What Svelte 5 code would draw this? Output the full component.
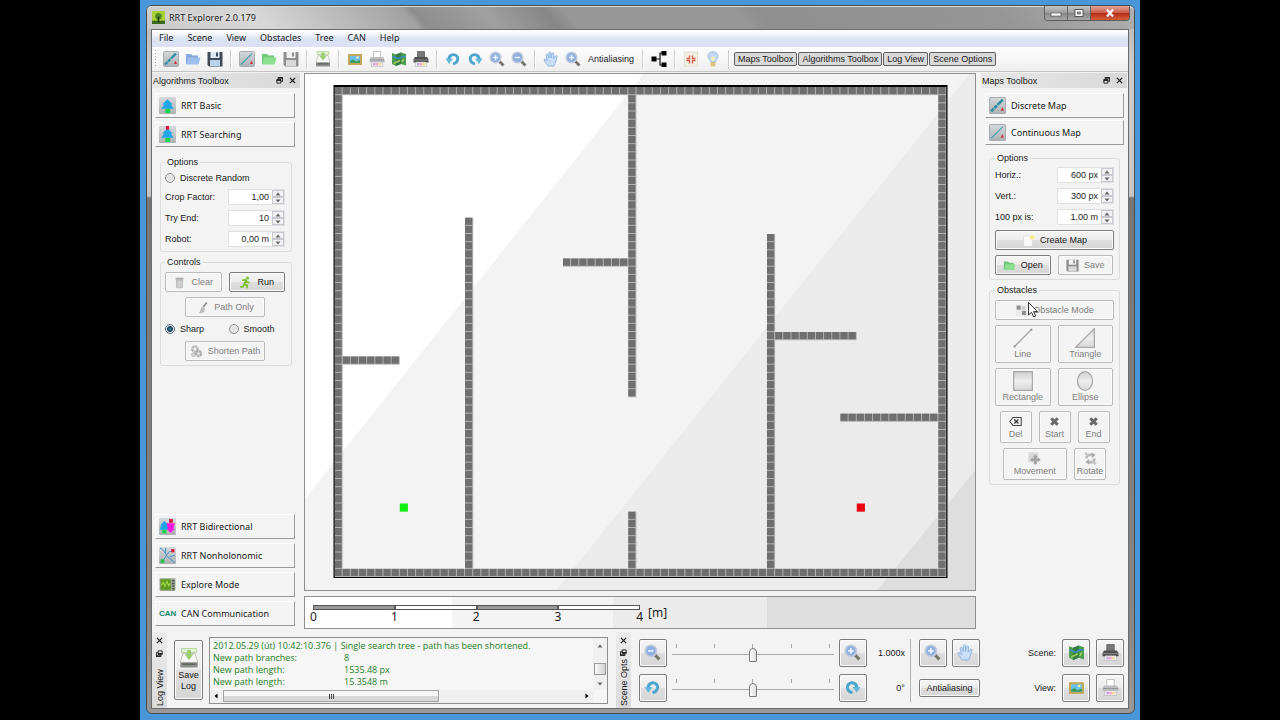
<script lang="ts">
	type Wall = { x: number; y: number; w: number; h: number };

	const COLS = 75;
	const ROWS = 60;

	const walls: Wall[] = [
		{ x: 0, y: 0, w: COLS, h: 1 },
		{ x: 0, y: ROWS - 1, w: COLS, h: 1 },
		{ x: 0, y: 1, w: 1, h: ROWS - 2 },
		{ x: COLS - 1, y: 1, w: 1, h: ROWS - 2 },
		{ x: 16, y: 16, w: 1, h: 43 },
		{ x: 36, y: 1, w: 1, h: 37 },
		{ x: 36, y: 52, w: 1, h: 7 },
		{ x: 53, y: 18, w: 1, h: 41 },
		{ x: 28, y: 21, w: 8, h: 1 },
		{ x: 1, y: 33, w: 7, h: 1 },
		{ x: 54, y: 30, w: 10, h: 1 },
		{ x: 62, y: 40, w: 12, h: 1 }
	];

	const cells = walls.flatMap((wall) =>
		Array.from({ length: wall.w * wall.h }, (_, i) => ({
			x: wall.x + (i % wall.w),
			y: wall.y + Math.floor(i / wall.w)
		}))
	);

	const menus = ['File', 'Scene', 'View', 'Obstacles', 'Tree', 'CAN', 'Help'];

	const tools = [
		[['map', 'Discrete map'], ['folder-blue', 'Open map'], ['floppy', 'Save map']],
		[['map-thin', 'Continuous map'], ['folder', 'Open tree'], ['floppy-gray', 'Save tree']],
		[['drive', 'Save log']],
		[['picture', 'Save view'], ['printer', 'Print view'], ['mapgreen', 'Save scene'], ['printer-dark', 'Print scene']],
		[['undo', 'Rotate left'], ['redo', 'Rotate right'], ['zoom-in', 'Zoom in'], ['zoom-out', 'Zoom out']]
	];

	const toggles = ['Maps Toolbox', 'Algorithms Toolbox', 'Log View', 'Scene Options'];

	const bottomPages = [
		['bidi', 'RRT Bidirectional'],
		['nonholo', 'RRT Nonholonomic'],
		['explore', 'Explore Mode'],
		['can', 'CAN Communication']
	];

	const log = [
		['New path branches:', '8'],
		['New path length:', '1535.48 px'],
		['New path length:', '15.3548 m']
	];

	let path = $state('sharp');
	let zoom = $state(50);
	let rotation = $state(50);
	let crop = $state('1,00');
	let tryEnd = $state('10');
	let robot = $state('0,00 m');
	let horiz = $state('600 px');
	let vert = $state('300 px');
	let unit = $state('1,00 m');
</script>

{#snippet icon(name: string)}
	<svg class="icon" viewBox="0 0 16 16" aria-hidden="true">
		{#if name === 'map' || name === 'map-thin'}
			<rect x="0.5" y="0.5" width="15" height="15" rx="1" fill="url(#tile)" stroke="#a9adb0" />
			{#if name === 'map'}
				<path d="M2 13.500L4.500 11M5 10.500L7.500 8M8 7.500L13 2.500" stroke="#2b8fa3" stroke-width="2.400" />
			{:else}
				<path d="M2 13.500L13 2.500" stroke="#46a3a8" stroke-width="1.200" />
			{/if}
			<path d="M11 13L12.500 9.500L14 13Z" fill="#d2303c" />
		{:else if name === 'folder' || name === 'folder-blue'}
			{@const blue = name === 'folder-blue'}
			<path d="M1 3H6L7.500 4.500H13V13H1Z" fill={blue ? '#86a9dd' : '#70c878'} />
			<path d="M3 6.500H15.500L13.500 13.500H1.500Z" fill={blue ? '#9fc0ee' : '#8be08f'} />
		{:else if name === 'floppy' || name === 'floppy-gray'}
			{@const dark = name === 'floppy'}
			<path d="M0.500 1H15.500V15.500H2L0.500 14Z" fill={dark ? '#3f4b58' : '#8f8f8f'} />
			<rect x="3.500" y="1" width="9" height="6" fill={dark ? '#dfe9f5' : '#f1f1f1'} />
			<rect x="9" y="1.500" width="2" height="4" fill={dark ? '#3f4b58' : '#8f8f8f'} />
			<rect x="3" y="9" width="10" height="6" fill={dark ? '#b9d2ea' : '#d9d9d9'} />
		{:else if name === 'drive'}
			<path d="M3 4.500H13L15 11.500H1Z" fill="#f6f6f4" stroke="#b8b8b4" stroke-width="0.700" />
			<path d="M1 11.500H15V14.500C15 15 14.500 15.500 14 15.500H2C1.500 15.500 1 15 1 14.500Z" fill="#8d908d" />
			<rect x="2.500" y="12.300" width="11" height="1.200" fill="#5c605c" />
			<rect x="2" y="0.500" width="12" height="3" fill="#e2f0d6" stroke="#a8cf88" stroke-width="0.600" />
			<path d="M6.500 1.500H9.500V5H11.500L8 9.500L4.500 5H6.500Z" fill="#9acc70" />
		{:else if name === 'picture'}
			<rect x="1" y="3" width="14" height="11" fill="#bfa75c" />
			<rect x="3" y="5" width="10" height="7" fill="#6cc0ee" />
			<path d="M3 12V10L6 8.500L9 10.500L13 9V12Z" fill="#3f9a5c" />
			<circle cx="10.500" cy="6.500" r="1.200" fill="#f5f3b4" />
		{:else if name === 'printer' || name === 'printer-dark'}
			{@const dark = name === 'printer-dark'}
			<path d="M4.500 0.500H11.500V7H4.500Z" fill={dark ? '#777' : '#fff'} stroke={dark ? '#555' : '#aaa'} stroke-width="0.700" />
			<path d="M2 6H14L15.500 8.500V11.500H0.500V8.500Z" fill={dark ? '#4e4e4e' : '#bcbec2'} />
			<rect x="1" y="8.500" width="14" height="1" fill={dark ? '#888' : '#94969a'} />
			<path d="M3 11H13L14 15.500H2Z" fill="#f3f3f6" stroke="#aaa" stroke-width="0.500" />
			<rect x="4" y="12" width="2.500" height="2.500" fill="#c8a8e0" />
			<rect x="6.500" y="12" width="3" height="2.500" fill="#f0b0c8" />
			<rect x="9.500" y="12" width="2.500" height="2.500" fill="#f0dc94" />
		{:else if name === 'mapgreen'}
			<path d="M1 2L5 3.500L10 1.500L15 3V14.500L10 13L5 15L1 13Z" fill="#4a9c4e" />
			<path d="M5 3.500L10 1.500V13L5 15Z" fill="#347c42" />
			<path d="M1.500 6C4 5 5 8 7.500 7.500S10 4 14.500 6" fill="none" stroke="#3c8cc8" stroke-width="1.500" />
			<path d="M3 13C4 10 7 12 9 9M11 11L13 8" fill="none" stroke="#a2ce5c" stroke-width="1.500" />
		{:else if name === 'undo'}
			<path d="M4 8.500C3.500 4.500 8.500 2 11.700 5C14.200 8 12 12.500 8 12.800" fill="none" stroke="#4aa6cc" stroke-width="2.800" />
			<path d="M0.500 7.500H8L4 13Z" fill="#62b8da" />
		{:else if name === 'redo'}
			<path d="M12 8.500C12.500 4.500 7.500 2 4.300 5C1.800 8 4 12.500 8 12.800" fill="none" stroke="#4aa6cc" stroke-width="2.800" />
			<path d="M15.500 7.500H8L12 13Z" fill="#62b8da" />
		{:else if name === 'zoom-in' || name === 'zoom-out' || name === 'zoom-fit'}
			<path d="M10 10L14.500 14.500" stroke="#77736d" stroke-width="2.800" />
			<circle cx="6.500" cy="6.500" r="5.300" fill="#8eb0e0" stroke="#c2cad8" stroke-width="1.500" />
			<path d="M3.800 6.500H9.200" stroke="#eef4ff" stroke-width="1.500" />
			{#if name !== 'zoom-out'}
				<path d="M6.500 3.800V9.200" stroke="#eef4ff" stroke-width="1.500" />
			{/if}
		{:else if name === 'hand'}
			<path
				d="M5 15C3.500 13 1.500 10.500 1 8.500C2 7.500 3 8.500 4.200 10L3 4C3.500 2.500 4.800 3 5 4L6 7L5.800 2C6.300 0.500 7.800 0.700 8 2V7L9 2.500C9.700 1.200 11 1.700 10.800 3L10.500 7.500L12.500 5C13.300 4.200 14.500 4.800 14 6L12.500 11C12 13 11.500 14 11 15Z"
				fill="#c9dff8"
				stroke="#8bb0e0"
				stroke-width="0.900"
			/>
		{:else if name === 'nodes'}
			<path d="M4 8H9M13 2H9V14H13" fill="none" stroke="#111" stroke-width="1.200" />
			<rect x="0.500" y="5.500" width="5" height="5" fill="#000" />
			<rect x="10.500" y="0" width="5" height="4.500" fill="#000" />
			<rect x="10.500" y="11.500" width="5" height="4.500" fill="#000" />
		{:else if name === 'fit'}
			<rect x="1.500" y="1" width="13" height="14" fill="#f2efe4" stroke="#dcd8cb" stroke-width="0.700" />
			<path d="M6.500 4.500V7.500H3.500M9.500 4.500V7.500H12.500M6.500 12.500V9.500H3.500M9.500 12.500V9.500H12.500" fill="none" stroke="#d6604e" stroke-width="1.400" />
		{:else if name === 'bulb'}
			<path d="M5.500 11C5.500 9 3 8 3 5C3 2.300 5.200 0.700 8 0.700S13 2.300 13 5C13 8 10.500 9 10.500 11Z" fill="#c4d8f2" stroke="#9ab6dc" stroke-width="0.800" />
			<path d="M6.500 5.500H9.500V10H6.500Z" fill="#f5f0b0" />
			<rect x="5.500" y="11" width="5" height="4.500" rx="1" fill="#d8c478" />
		{:else if name === 'basic' || name === 'searching'}
			<rect width="16" height="16" rx="1" fill="url(#tile)" />
			<rect x="6" y="11" width="4.500" height="4" fill="#18d848" />
			<path d="M8 2L13 7H11L14 11H2L5 7H3Z" fill="#22a6ea" />
			{#if name === 'searching'}
				<rect x="6.500" y="0" width="3" height="3.500" fill="#d8183c" />
			{/if}
		{:else if name === 'bidi'}
			<rect width="16" height="16" rx="1" fill="url(#tile)" />
			<rect x="3" y="11" width="4" height="3.500" fill="#18d848" />
			<rect x="9.500" y="1" width="3.500" height="3.500" fill="#d8183c" />
			<path d="M5 2.500L9 7H8L9.500 11H0.500L2 7H1Z" fill="#22a6ea" />
			<path d="M11 14L7 10H8.500L7 5H15L13.500 10H15Z" fill="#f418e4" />
		{:else if name === 'nonholo'}
			<rect width="16" height="16" rx="1" fill="url(#tile)" />
			<path d="M1 1C5 3 6 6 7 8S11 11 15 15M3 13C5 12 6 9 7 8S9 4 12 4M6 1L6.500 6M10 9L15 8" fill="none" stroke="#3a8fc8" stroke-width="0.900" />
			<rect x="1.500" y="11.500" width="3.500" height="3.500" fill="#2cc050" />
			<rect x="11.500" y="2" width="3" height="3" fill="#d8183c" />
		{:else if name === 'explore'}
			<rect x="0.500" y="2" width="15" height="12" rx="1" fill="#9ea69c" />
			<rect x="1.500" y="3" width="9.500" height="10" fill="#5f9c1e" />
			<path d="M2 9L4 6L5.500 9.500L7.500 5L9 9L10.500 7" fill="none" stroke="#a6d84c" />
			<path d="M12.500 4.500H14.500M12.500 7H14.500M12.500 9.500H14.500M12.500 12H14.500" stroke="#3c4a3c" stroke-width="1.300" />
		{:else if name === 'trash'}
			<path d="M3.500 5H12.500L12 15H4Z" fill="#bdbdbd" />
			<rect x="3" y="2" width="10" height="2.500" rx="1" fill="#a8a8a8" />
			<path d="M6 6V14M8 6V14M10 6V14" stroke="#dedede" />
		{:else if name === 'runner'}
			<circle cx="10.500" cy="2.500" r="2" fill="#8bc63a" />
			<path d="M4 5.500L8 4.500L10 7.500L13 8M8.500 5.500L6.500 10L10 11.500V15M6.500 10L5 13L1.500 13.500" fill="none" stroke="#7cc12c" stroke-width="2.200" />
		{:else if name === 'brush'}
			<path d="M12.500 1L14 2.500L10 8L8 7Z" fill="#8e8e8e" />
			<path d="M7 7L11 9L10 14L3 15C5.500 13 5.500 10 7 7Z" fill="#bdbdbd" />
		{:else if name === 'gears'}
			<circle cx="6" cy="5" r="3.300" fill="none" stroke="#b8b8b8" stroke-width="3" stroke-dasharray="3 0.600" />
			<circle cx="10.500" cy="10.500" r="3" fill="none" stroke="#aaa" stroke-width="3" stroke-dasharray="3 0.600" />
			<circle cx="4" cy="12" r="1.800" fill="none" stroke="#c4c4c4" stroke-width="2" />
		{:else if name === 'new'}
			<path d="M2 2.500H13V15H2Z" fill="#fafafa" stroke="#d4d4d4" stroke-width="0.700" />
			<circle cx="12.500" cy="4" r="3.300" fill="#f5f3b4" />
			<circle cx="12.500" cy="4" r="1.500" fill="#efe68a" />
		{:else if name === 'mode'}
			<rect x="1.500" y="1" width="13" height="14" fill="#ebebeb" />
			<rect x="2" y="2" width="5" height="5" fill="#8e8e8e" />
			<rect x="8.500" y="8.500" width="5" height="5" fill="#8e8e8e" />
			<rect x="8.500" y="3" width="4" height="4" fill="#c8c8c8" />
		{:else if name === 'line'}
			<path d="M1 15L15 1" stroke="#a4a4a4" />
			<path d="M0.500 14H2V15.500H0.500ZM14 0.500H15.500V2H14Z" fill="#909090" />
		{:else if name === 'triangle'}
			<path d="M15.500 0.500V15.500H0.500Z" fill="url(#shape)" stroke="#a8a8a8" />
		{:else if name === 'rectangle'}
			<rect x="0.500" y="0.500" width="15" height="15" fill="url(#shape)" stroke="#a8a8a8" />
		{:else if name === 'ellipse'}
			<ellipse cx="8" cy="8" rx="6" ry="7.500" fill="url(#shape)" stroke="#a8a8a8" />
		{:else if name === 'del'}
			<path d="M1 8L5 3H15V13H5Z" fill="none" stroke="#444" stroke-width="1.300" />
			<path d="M6.500 5.500L11.500 10.500M11.500 5.500L6.500 10.500" stroke="#333" stroke-width="1.600" />
		{:else if name === 'cross'}
			<path d="M4 4L12 12M12 4L4 12" stroke="#696969" stroke-width="3.800" />
		{:else if name === 'move'}
			<rect x="0.500" y="0.500" width="12" height="12" fill="#d8d8d8" />
			<path d="M9 3L12 6H10.500V8H12.500V6.500L15.500 9.500L12.500 12.500V11H10.500V13H12L9 16L6 13H7.500V11H5.500V12.500L2.500 9.500L5.500 6.500V8H7.500V6H6Z" fill="#a2a2a2" />
		{:else if name === 'rotate'}
			<path d="M3 8C3 4 7 2.500 10 4M13 8C13 12 9 13.500 6 12" fill="none" stroke="#b8b8b8" stroke-width="3.200" />
			<path d="M9 0.500L14.500 3.500L10 7.500ZM7 15.500L1.500 12.500L6 8.500Z" fill="#aaa" />
			<path d="M1.500 1L5 4.500M11 11.500L14.500 15" stroke="#c4c4c4" stroke-width="3" />
		{/if}
	</svg>
{/snippet}

{#snippet dockButtons()}
	<button class="dock-btn" aria-label="Float">
		<svg viewBox="0 0 8 8"><path d="M2.500 2V1H7.500V5H6M1 3.500H5.500V7H1Z" fill="none" stroke="#111" /><path d="M2 1H8M0.500 3.500H6" stroke="#111" stroke-width="1.600" /></svg>
	</button>
	<button class="dock-btn" aria-label="Close">
		<svg viewBox="0 0 8 8"><path d="M1 1L7 7M7 1L1 7" stroke="#111" stroke-width="1.400" /></svg>
	</button>
{/snippet}

{#snippet arrows(label: string)}
	<span class="arrows">
		<button aria-label="Increase {label}"><svg viewBox="0 0 6 4"><path d="M3 0.500L5.500 3.500H0.500Z" /></svg></button>
		<button aria-label="Decrease {label}"><svg viewBox="0 0 6 4"><path d="M3 3.500L5.500 0.500H0.500Z" /></svg></button>
	</span>
{/snippet}

<svg class="defs" aria-hidden="true">
	<defs>
		<linearGradient id="tile" x1="0" y1="0" x2="0" y2="1">
			<stop offset="0" stop-color="#d6d9db" />
			<stop offset="1" stop-color="#adb1b3" />
		</linearGradient>
		<linearGradient id="shape" x1="0" y1="0" x2="0" y2="1">
			<stop offset="0" stop-color="#cecece" />
			<stop offset="0.5" stop-color="#ededed" />
			<stop offset="1" stop-color="#d8d8d8" />
		</linearGradient>
	</defs>
</svg>

<div class="screen">
	<div class="desktop">
		<div class="window">
			<header class="titlebar">
				<svg class="app-icon" viewBox="0 0 16 16" aria-hidden="true">
					<rect width="16" height="16" fill="#a6d236" />
					<rect y="12" width="16" height="4" fill="#3d6a1c" />
					<circle cx="8" cy="6.500" r="4" fill="#4f8a22" />
					<rect x="7" y="7" width="2" height="7" fill="#22380f" />
				</svg>
				<h1>RRT Explorer 2.0.179</h1>
				<div class="caption">
					<button aria-label="Minimize"><svg viewBox="0 0 12 10"><rect x="1" y="5" width="10" height="3" fill="#fff" stroke="#555" stroke-width="0.700" /></svg></button>
					<button aria-label="Maximize"><svg viewBox="0 0 12 10"><rect x="2" y="1.500" width="8" height="7" fill="#fff" stroke="#555" /><rect x="4.500" y="4" width="3" height="2" fill="#999" stroke="#555" stroke-width="0.700" /></svg></button>
					<button class="close" aria-label="Close window"><svg viewBox="0 0 12 10"><path d="M3 1.500L9 8.500M9 1.500L3 8.500" stroke="#fff" stroke-width="2.200" /></svg></button>
				</div>
			</header>

			<div class="client">
				<nav class="menubar">
					{#each menus as menu}
						<button>{menu}</button>
					{/each}
				</nav>

				<div class="toolbar">
					<span class="grip"></span>
					{#each tools as group}
						{#each group as [name, label]}
							<button class="tool" aria-label={label}>{@render icon(name)}</button>
						{/each}
						<span class="sep"></span>
					{/each}
					<button class="tool" aria-label="Pan">{@render icon('hand')}</button>
					<button class="tool" aria-label="Reset zoom">{@render icon('zoom-fit')}</button>
					<button class="tool-text">Antialiasing</button>
					<span class="sep"></span>
					<button class="tool" aria-label="Show tree">{@render icon('nodes')}</button>
					<span class="sep"></span>
					<button class="tool" aria-label="Fit window">{@render icon('fit')}</button>
					<button class="tool" aria-label="Hints">{@render icon('bulb')}</button>
					<span class="sep"></span>
					{#each toggles as toggle}
						<button class="toggle" aria-pressed="true">{toggle}</button>
					{/each}
				</div>

				<div class="middle">
					<aside class="dock left">
						<div class="dock-title"><h2>Algorithms Toolbox</h2>{@render dockButtons()}</div>
						<div class="pages">
							<button class="page">{@render icon('basic')}RRT Basic</button>
							<button class="page">{@render icon('searching')}RRT Searching</button>
							<div class="page-body">
								<fieldset class="options">
									<legend>Options</legend>
									<label class="choice"><input type="radio" name="random" />Discrete Random</label>
									<div class="field">
										<label for="crop">Crop Factor:</label>
										<div class="spin"><input id="crop" bind:value={crop} />{@render arrows('crop factor')}</div>
									</div>
									<div class="field">
										<label for="try-end">Try End:</label>
										<div class="spin"><input id="try-end" bind:value={tryEnd} />{@render arrows('try end')}</div>
									</div>
									<div class="field">
										<label for="robot">Robot:</label>
										<div class="spin"><input id="robot" bind:value={robot} />{@render arrows('robot')}</div>
									</div>
								</fieldset>
								<fieldset class="controls">
									<legend>Controls</legend>
									<div class="pair">
										<button class="btn" disabled>{@render icon('trash')}Clear</button>
										<button class="btn">{@render icon('runner')}Run</button>
									</div>
									<button class="btn mid" disabled>{@render icon('brush')}Path Only</button>
									<div class="pair">
										<label class="choice"><input type="radio" name="path" value="sharp" bind:group={path} />Sharp</label>
										<label class="choice"><input type="radio" name="path" value="smooth" bind:group={path} />Smooth</label>
									</div>
									<button class="btn mid" disabled>{@render icon('gears')}Shorten Path</button>
								</fieldset>
							</div>
							{#each bottomPages as [name, label]}
								<button class="page">
									{#if name === 'can'}
										<span class="can">CAN</span>
									{:else}
										{@render icon(name)}
									{/if}
									{label}
								</button>
							{/each}
						</div>
					</aside>

					<main class="center">
						<svg class="scene" viewBox="0 0 669 516" preserveAspectRatio="xMidYMid meet">
							<path d="M-600 -200H1300V900H-600Z" fill="#fff" />
							<path d="M338 0H1300V900H-384L0 424Z" fill="#f3f3f3" />
							<path d="M664 0H1300V900H-60L251 516Z" fill="#ebebeb" />
							<path d="M669 397L1300 -380V900H270L572 516Z" fill="#dedede" />
							<rect x="29" y="12" width="612" height="491" fill="none" stroke="#000" stroke-width="2" />
							<svg x="29" y="13" width="612" height="490" viewBox="0 0 {COLS} {ROWS}" preserveAspectRatio="none">
								{#each walls as wall}
									<rect x={wall.x} y={wall.y} width={wall.w} height={wall.h} fill="#b4b4b4" />
								{/each}
								{#each cells as cell}
									<rect x={cell.x} y={cell.y} width="0.88" height="0.88" fill="#6f6f6f" />
								{/each}
								<rect x="8" y="51" width="1" height="1" fill="#12ee12" />
								<rect x="64" y="51" width="1" height="1" fill="#ea0010" />
							</svg>
						</svg>

						<div class="scale">
							<div class="ruler">
								{#each [1, 2, 3, 4] as n}
									<span class="segment" class:filled={n % 2 === 1}><span class="mark">{n}</span></span>
								{/each}
								<span class="mark zero">0</span>
							</div>
							<span class="unit">[m]</span>
						</div>
					</main>

					<aside class="dock right">
						<div class="dock-title"><h2>Maps Toolbox</h2>{@render dockButtons()}</div>
						<div class="pages">
							<button class="page">{@render icon('map')}Discrete Map</button>
							<button class="page">{@render icon('map-thin')}Continuous Map</button>
							<div class="page-body">
								<fieldset class="options">
									<legend>Options</legend>
									<div class="field">
										<label for="horiz">Horiz.:</label>
										<div class="spin"><input id="horiz" bind:value={horiz} />{@render arrows('width')}</div>
									</div>
									<div class="field">
										<label for="vert">Vert.:</label>
										<div class="spin"><input id="vert" bind:value={vert} />{@render arrows('height')}</div>
									</div>
									<div class="field">
										<label for="unit">100 px is:</label>
										<div class="spin"><input id="unit" bind:value={unit} />{@render arrows('scale')}</div>
									</div>
									<button class="btn wide">{@render icon('new')}Create Map</button>
									<div class="pair">
										<button class="btn">{@render icon('folder')}Open</button>
										<button class="btn" disabled>{@render icon('floppy-gray')}Save</button>
									</div>
								</fieldset>
								<fieldset class="obstacles">
									<legend>Obstacles</legend>
									<div class="mode">
										<button class="btn wide" disabled>{@render icon('mode')}Obstacle Mode</button>
										<svg class="cursor" viewBox="0 0 10 16" aria-hidden="true">
											<path d="M0.500 0.500V13L3.500 10.300L5.700 15L7.700 14L5.600 9.600H9.500Z" fill="#fff" stroke="#333" />
										</svg>
									</div>
									<div class="pair">
										<button class="btn stack" disabled>{@render icon('line')}Line</button>
										<button class="btn stack" disabled>{@render icon('triangle')}Triangle</button>
									</div>
									<div class="pair">
										<button class="btn stack" disabled>{@render icon('rectangle')}Rectangle</button>
										<button class="btn stack" disabled>{@render icon('ellipse')}Ellipse</button>
									</div>
									<div class="row">
										<button class="btn small" disabled>{@render icon('del')}Del</button>
										<button class="btn small" disabled>{@render icon('cross')}Start</button>
										<button class="btn small" disabled>{@render icon('cross')}End</button>
									</div>
									<div class="row">
										<button class="btn small movement" disabled>{@render icon('move')}Movement</button>
										<button class="btn small" disabled>{@render icon('rotate')}Rotate</button>
									</div>
								</fieldset>
							</div>
						</div>
					</aside>
				</div>

				<div class="bottom">
					<section class="log-dock">
						<div class="side-title"><h2>Log View</h2>{@render dockButtons()}</div>
						<button class="btn save-log">{@render icon('drive')}Save<br />Log</button>
						<div class="log">
							<div class="log-text">
								<p>2012.05.29 (út) 10:42:10.376 | Single search tree - path has been shortened.</p>
								{#each log as [label, value]}
									<p class="entry"><span>{label}</span><span>{value}</span></p>
								{/each}
							</div>
							<div class="vbar"><svg viewBox="0 0 6 4"><path d="M3 0.500L5.500 3.500H0.500Z" /></svg><span></span><svg viewBox="0 0 6 4"><path d="M3 3.500L5.500 0.500H0.500Z" /></svg></div>
							<div class="hbar"><svg viewBox="0 0 4 6"><path d="M0.500 3L3.500 0.500V5.500Z" /></svg><span><i></i></span><svg viewBox="0 0 4 6"><path d="M3.500 3L0.500 0.500V5.500Z" /></svg></div>
						</div>
					</section>

					<section class="scene-dock">
						<div class="side-title"><h2>Scene Opts</h2>{@render dockButtons()}</div>
						<div class="sliders">
							<button class="btn square" aria-label="Zoom out">{@render icon('zoom-out')}</button>
							<div class="slider">
								<div class="ticks"><i></i><i></i><i></i><i></i><i></i></div>
								<input type="range" aria-label="Zoom" bind:value={zoom} />
							</div>
							<button class="btn square" aria-label="Zoom in">{@render icon('zoom-in')}</button>
							<output>1.000x</output>
							<button class="btn square" aria-label="Rotate left">{@render icon('undo')}</button>
							<div class="slider">
								<div class="ticks"><i></i><i></i><i></i><i></i><i></i></div>
								<input type="range" aria-label="Rotation" bind:value={rotation} />
							</div>
							<button class="btn square" aria-label="Rotate right">{@render icon('redo')}</button>
							<output>0°</output>
						</div>
						<div class="view-tools">
							<div class="pair">
								<button class="btn square" aria-label="Reset zoom">{@render icon('zoom-fit')}</button>
								<button class="btn square" aria-label="Pan">{@render icon('hand')}</button>
							</div>
							<div class="pair"><button class="btn aa">Antialiasing</button></div>
						</div>
						<div class="exports">
							<span>Scene:</span>
							<button class="btn square" aria-label="Save scene">{@render icon('mapgreen')}</button>
							<button class="btn square" aria-label="Print scene">{@render icon('printer-dark')}</button>
							<span>View:</span>
							<button class="btn square" aria-label="Save view">{@render icon('picture')}</button>
							<button class="btn square" aria-label="Print view">{@render icon('printer')}</button>
						</div>
					</section>
				</div>
			</div>
		</div>
	</div>
</div>

<style>
	:global(body) {
		margin: 0;
		background: #000;
	}

	.screen {
		--tahoma: 'Liberation Sans', Arial, sans-serif;
		--segoe: 'Noto Sans', 'Open Sans', sans-serif;
		display: flex;
		min-height: 100vh;
		padding: 0 140px;
		box-sizing: border-box;
		background: #000;
		color: #1a1a1a;
		font: 9px/12px var(--tahoma);
	}

	.screen * {
		box-sizing: border-box;
	}

	h1,
	h2,
	p,
	fieldset,
	legend {
		margin: 0;
		padding: 0;
		font: inherit;
	}

	button,
	input {
		margin: 0;
		padding: 0;
		border: 0;
		background: none;
		color: inherit;
		font: inherit;
	}

	.defs {
		position: absolute;
		width: 0;
		height: 0;
	}

	.icon {
		display: block;
		flex: none;
		width: 16px;
		height: 16px;
	}

	.desktop {
		display: flex;
		flex: 1;
		padding: 5px 5px 6px 6px;
		background: #4997d8;
	}

	.window {
		display: flex;
		flex: 1;
		flex-direction: column;
		padding: 0 5px 4px 4px;
		border: 1px solid #4a4d50;
		border-radius: 6px;
		background: linear-gradient(#b4b4b4 0, #cdcdcd 60px, #c6c6c6 190px, #777 192px, #858585 600px, #999 100%);
	}

	.titlebar {
		display: flex;
		align-items: center;
		height: 23px;
		margin: 0 -5px 0 -4px;
		padding-left: 5px;
		border-radius: 5px 5px 0 0;
		background: linear-gradient(48deg, #c9c9c9 0, #d8d8d8 12%, #b4b4b4 22%, #a2a2a2 27%, #8d8d8d 28%, #a0a0a0 35%, #868686 41%, #979797 43%, #979797 60%, #8f8f8f 62%, #969696 86%, #b0b0b0 100%);
		box-shadow: inset 0 1px #dcdcdc;
	}

	.app-icon {
		width: 13px;
		height: 13px;
		margin-right: 4px;
	}

	h1 {
		flex: 1;
		font: 9px/14px var(--segoe);
		text-shadow: 0 0 4px #fff;
	}

	.caption {
		display: flex;
		align-self: flex-start;
		margin-right: 4px;
		border: 1px solid #5c5c5c;
		border-top: 0;
		border-radius: 0 0 4px 4px;
		overflow: hidden;
	}

	.caption button {
		display: grid;
		place-items: center;
		width: 23px;
		height: 14px;
		border-right: 1px solid #666;
		background: linear-gradient(#c4c4c4, #9c9c9c 50%, #858585 50%, #a8a8a8);
	}

	.caption .close {
		width: 38px;
		border: 0;
		background: linear-gradient(#e0a596, #cc5a44 50%, #b52a14 50%, #d4603c);
	}

	.caption svg {
		width: 12px;
		height: 10px;
	}

	.client {
		display: flex;
		flex: 1;
		flex-direction: column;
		border: 1px solid #6b6b6b;
		background: #f3f3f3;
	}

	.menubar {
		display: flex;
		height: 17px;
		padding: 0 0 2px;
		background: linear-gradient(#fff 0, #f4f6fa 25%, #dce3f2 50%, #dddff5 100%);
		font: 9px/14px var(--segoe);
	}

	.menubar button {
		padding: 0 7px;
	}

	.toolbar {
		display: flex;
		align-items: center;
		height: 25px;
		padding-left: 3px;
		border-bottom: 1px solid #c4c4c4;
		background: linear-gradient(#fdfdfd, #efefef);
		white-space: nowrap;
	}

	.grip {
		width: 5px;
		height: 18px;
		background: repeating-linear-gradient(#aaa 0 1px, transparent 1px 3px) 0 0 / 1px 100% no-repeat;
	}

	.tool {
		display: grid;
		place-items: center;
		width: 22px;
		height: 22px;
	}

	.sep {
		width: 10px;
		height: 19px;
		background: linear-gradient(90deg, transparent 4px, #ccc 4px 5px, #fff 5px 6px, transparent 6px);
	}

	.tool-text {
		width: 54px;
	}

	.toggle {
		height: 14px;
		margin-right: 1px;
		padding: 0 3px;
		border: 1px solid #5f5f5f;
		border-radius: 2px;
		background: #d9d9d9;
	}

	.middle {
		display: flex;
		flex: 1;
		padding: 1px 1px 3px 0;
	}

	.dock {
		display: flex;
		flex-direction: column;
	}

	.left {
		flex: 0 0 148px;
	}

	.right {
		flex: 0 0 146px;
	}

	.dock-title {
		display: flex;
		align-items: center;
		height: 15px;
		padding: 0 1px;
		background: linear-gradient(90deg, #e8e8e8, #d8d8d8);
	}

	h2 {
		flex: 1;
		white-space: nowrap;
	}

	.dock-btn {
		display: grid;
		place-items: center;
		width: 13px;
		height: 13px;
	}

	.dock-btn svg {
		width: 7px;
		height: 7px;
	}

	.pages {
		display: flex;
		flex: 1;
		flex-direction: column;
		gap: 4px;
		padding: 5px 5px 3px 3px;
	}

	.right .pages {
		gap: 2px;
		padding: 5px 3px 2px 4px;
	}

	.page {
		display: flex;
		align-items: center;
		gap: 5px;
		height: 25px;
		padding-left: 3px;
		border: solid;
		border-width: 1px;
		border-color: #fdfdfd #9a9a9a #9a9a9a #fdfdfd;
		background: #f4f4f4;
		font: 9px/14px var(--segoe);
	}

	.page .icon {
		width: 17px;
		height: 17px;
	}

	.can {
		width: 17px;
		color: #0c8a68;
		font: bold 8px/12px 'Liberation Sans', sans-serif;
	}

	.page-body {
		flex: 1;
		padding: 5px 3px 0 5px;
	}

	.right .page-body {
		padding: 5px 4px 0;
	}

	fieldset {
		display: flex;
		flex-direction: column;
		gap: 5px;
		min-width: 0;
		margin-bottom: 4px;
		padding: 4px 6px 4px 4px;
		border: 1px solid #dcdcdc;
		border-radius: 3px;
	}

	.right fieldset {
		padding: 4px 5px;
	}

	.right .options {
		padding-top: 3px;
	}

	.right .pair {
		padding-right: 1px;
	}

	legend {
		padding: 0 2px;
	}

	.choice {
		display: flex;
		flex: 1;
		align-items: center;
		gap: 5px;
		height: 14px;
	}

	input[type='radio'] {
		width: 10px;
		height: 10px;
		border: 1px solid #8a8a8a;
		border-radius: 50%;
		background: radial-gradient(#e4e4e4 40%, #f8f8f8);
		appearance: none;
	}

	input[type='radio']:checked {
		border-color: #5a6a76;
		background: radial-gradient(#3a8aa8 0, #1c3e54 45%, #e8eef2 60%);
	}

	.field {
		display: flex;
		align-items: center;
		justify-content: space-between;
		height: 16px;
	}

	.spin {
		display: flex;
		width: 57px;
		height: 16px;
		border: 1px solid #e0e0e0;
		background: #fff;
	}

	.spin input {
		flex: 1;
		width: 0;
		padding-right: 3px;
		text-align: right;
	}

	.arrows {
		display: flex;
		flex-direction: column;
		width: 12px;
	}

	.arrows button {
		display: grid;
		flex: 1;
		place-items: center;
		border: 1px solid #c8c8d0;
		background: #f2f2f4;
	}

	.arrows svg,
	.vbar svg {
		width: 6px;
		height: 4px;
		fill: #666;
	}

	.btn {
		display: flex;
		flex: 1;
		align-items: center;
		justify-content: center;
		gap: 5px;
		min-height: 20px;
		padding: 0 2px;
		border: 1px solid #7c7c7c;
		border-radius: 2px;
		background: linear-gradient(#f5f5f5, #ececec 50%, #dedede 50%, #d6d6d6);
		box-shadow: inset 0 0 0 1px #fbfbfb;
		white-space: nowrap;
	}

	.btn:disabled {
		border-color: #bababa;
		background: #f4f4f4;
		color: #808080;
	}

	.btn .icon {
		width: 13px;
		height: 13px;
	}

	.mid {
		flex: none;
		align-self: center;
		width: 80px;
	}

	.wide {
		width: 100%;
	}

	.pair,
	.row {
		display: flex;
		gap: 7px;
	}

	.row {
		justify-content: center;
	}

	.mode {
		position: relative;
	}

	.cursor {
		position: absolute;
		top: 2px;
		left: 33px;
		width: 10px;
		height: 16px;
	}

	.stack,
	.small {
		flex-direction: column;
		gap: 0;
		height: 38px;
	}

	.btn.stack .icon {
		width: 20px;
		height: 20px;
	}

	.small {
		flex: 0 0 32px;
		height: 32px;
	}

	.movement {
		flex-basis: 64px;
	}

	.center {
		display: flex;
		flex: 1;
		flex-direction: column;
		gap: 5px;
		min-width: 0;
		padding: 0 5px 0 4px;
	}

	.scene {
		flex: 1 1 auto;
		width: 100%;
		height: 0;
		border: 1px solid #8f8f8f;
	}

	.scale {
		display: flex;
		align-items: center;
		height: 33px;
		padding: 0 8px;
		border: 1px solid #8f8f8f;
		background: linear-gradient(90deg, #fff 22%, #f4f4f4 22% 46%, #ebebeb 46% 69%, #dedede 69%);
		font: 12px/14px var(--segoe);
	}

	.ruler {
		position: relative;
		display: flex;
		width: 50%;
		height: 24px;
	}

	.segment {
		position: relative;
		flex: 1;
		height: 5px;
		margin-top: 4px;
		border: 1px solid #555;
		background: #fff;
	}

	.filled {
		background: #999;
	}

	.mark {
		position: absolute;
		top: 4px;
		right: -4px;
	}

	.zero {
		top: 9px;
		left: -3px;
		right: auto;
	}

	.unit {
		padding-left: 8px;
	}

	.bottom {
		display: flex;
		gap: 8px;
		height: 76px;
	}

	.log-dock {
		display: flex;
		flex: 457 1 0;
		min-width: 0;
	}

	.scene-dock {
		display: flex;
		flex: 510 1 0;
		align-items: center;
		min-width: 0;
		padding-right: 4px;
	}

	.side-title {
		display: flex;
		align-items: center;
		align-self: stretch;
		width: 15px;
		padding: 2px 0;
		background: linear-gradient(#dadada, #ececec);
		transform: rotate(180deg);
		writing-mode: vertical-rl;
	}

	.save-log {
		flex: 0 0 29px;
		flex-direction: column;
		align-self: center;
		gap: 2px;
		height: 60px;
		margin: 0 6px 0 7px;
		line-height: 11px;
		white-space: normal;
	}

	.btn.save-log .icon {
		width: 20px;
		height: 20px;
	}

	.log {
		display: grid;
		flex: 1;
		grid-template: 1fr 13px / 1fr 14px;
		align-self: center;
		min-width: 0;
		height: 67px;
		border: 1px solid #8f8f8f;
		background: #f6f6f6;
	}

	.log-text {
		overflow: hidden;
		padding: 2px 3px;
		color: #1c7f1c;
		font: 9px/12px 'Open Sans', sans-serif;
		white-space: nowrap;
	}

	.entry span:first-child {
		display: inline-block;
		width: 131px;
	}

	.vbar,
	.hbar {
		display: flex;
		align-items: center;
		justify-content: space-between;
		background: #f0f0f0;
	}

	.vbar {
		flex-direction: column;
		padding: 6px 0 4px;
	}

	.vbar span {
		width: 12px;
		height: 12px;
		margin-top: 8px;
		border: 1px solid #999;
		background: linear-gradient(90deg, #fafafa, #d4d4d4);
	}

	.hbar {
		gap: 5px;
		padding: 0 4px;
	}

	.hbar svg {
		width: 4px;
		height: 6px;
	}

	.hbar span {
		display: grid;
		place-items: center;
		width: 216px;
		height: 12px;
		margin-right: auto;
		border: 1px solid #a4a4a4;
		background: linear-gradient(#f6f6f6 50%, #d8d8d8 50%);
	}

	.hbar i {
		width: 5px;
		height: 5px;
		background: repeating-linear-gradient(90deg, #444 0 1px, transparent 1px 2px);
	}

	.square {
		flex: none;
		width: 28px;
		height: 28px;
	}

	.btn.square .icon {
		width: 17px;
		height: 17px;
	}

	.sliders {
		display: grid;
		flex: 1;
		grid-template-columns: 28px 1fr 28px 38px;
		row-gap: 7px;
		align-items: center;
		padding-left: 8px;
	}

	.slider {
		padding: 0 5px;
	}

	.ticks {
		display: flex;
		justify-content: space-between;
		padding: 0 4px;
	}

	.ticks i {
		width: 1px;
		height: 4px;
		background: #a8a8a8;
	}

	input[type='range'] {
		display: block;
		width: 100%;
		height: 14px;
		background: linear-gradient(#aaa, #aaa) center / 100% 1px no-repeat;
		appearance: none;
	}

	input[type='range']::-webkit-slider-thumb {
		width: 8px;
		height: 14px;
		border: 1px solid #777;
		border-radius: 4px 4px 1px 1px;
		background: linear-gradient(90deg, #fff, #ddd);
		appearance: none;
	}

	output {
		text-align: right;
	}

	.view-tools {
		display: flex;
		flex-direction: column;
		gap: 7px;
		margin-left: 5px;
		padding-left: 8px;
		border-left: 1px solid #b4b4b4;
	}

	.view-tools .pair {
		align-items: center;
		gap: 5px;
		height: 28px;
		padding: 0;
	}

	.aa {
		height: 18px;
		min-height: 0;
	}

	.exports {
		display: grid;
		grid-template-columns: 1fr 28px 28px;
		gap: 7px 6px;
		align-items: center;
		margin-left: 48px;
		text-align: right;
	}
</style>
